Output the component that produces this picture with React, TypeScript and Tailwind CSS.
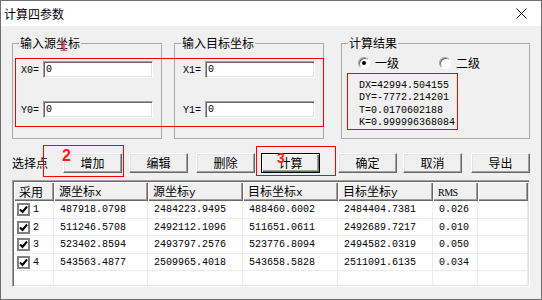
import React from "react";

const CJK = "font-['Noto_Sans_CJK_SC','Noto_Sans',sans-serif] text-[12px] leading-[14px]";
const MONO = "font-['Liberation_Mono','Noto_Sans_CJK_SC',monospace] text-[10px]";

function Btn({ label, ml, def }: { label: string; ml: string; def?: boolean }) {
  return (
    <div
      className={`${ml} w-[59px] h-[20px] flex items-center justify-center bg-[#f0f0f0] border ${
        def
          ? "border-black shadow-[inset_1px_1px_#fff,inset_-1px_-1px_#696969,inset_-2px_-2px_#a0a0a0]"
          : "border-t-white border-l-white border-b-[#696969] border-r-[#696969] shadow-[inset_-1px_-1px_#a0a0a0,inset_1px_1px_#e3e3e3]"
      } ${CJK} text-black`}
    >
      {label}
    </div>
  );
}

function Input({ value }: { value: string }) {
  return (
    <div className="w-[110px] h-[17px] bg-white border border-t-[#a0a0a0] border-l-[#a0a0a0] border-b-white border-r-white shadow-[inset_1px_1px_#696969,inset_-1px_-1px_#e3e3e3] flex items-center pl-[2px]">
      <span className={`${MONO} leading-[12px] text-black`}>{value}</span>
    </div>
  );
}

function Group({
  title,
  w,
  ml,
  children,
}: {
  title: string;
  w: string;
  ml?: string;
  children: React.ReactNode;
}) {
  return (
    <div className={`relative ${w} ${ml ?? ""} h-[96px] border border-[#a9a9a9]`}>
      <span className={`absolute left-[6px] top-[-8px] px-[1px] bg-[#f0f0f0] ${CJK} text-black`}>{title}</span>
      {children}
    </div>
  );
}

function CoordRow({ label, mt }: { label: string; mt?: string }) {
  return (
    <div className={`flex items-center ${mt ?? ""}`}>
      <span className={`w-[22px] ${MONO} leading-[12px] text-black pt-[3px]`}>{label}</span>
      <Input value="0" />
    </div>
  );
}

function Radio({ on, label }: { on?: boolean; label: string }) {
  return (
    <div className="w-[81px] flex items-center">
      <div className="w-[12px] h-[12px] rounded-full bg-white border border-t-[#a0a0a0] border-l-[#a0a0a0] border-b-white border-r-white shadow-[inset_1px_1px_#696969] flex items-center justify-center">
        {on && <div className="w-[4px] h-[4px] rounded-full bg-black" />}
      </div>
      <span className={`ml-[5px] ${CJK} text-black`}>{label}</span>
    </div>
  );
}

function Check() {
  return (
    <div className="w-[13px] h-[13px] bg-white border-2 border-[#808080] flex items-center justify-center">
      <svg width="9" height="9" viewBox="0 0 9 9">
        <path d="M1 4.5 L3.5 7 L8 1.5" stroke="#000" strokeWidth="2" fill="none" />
      </svg>
    </div>
  );
}

const cols = ["w-[40px]", "w-[94px]", "w-[95px]", "w-[95px]", "w-[95px]", "w-[45px]", "flex-1"];

const rows = [
  ["1", "487918.0798", "2484223.9495", "488460.6002", "2484404.7381", "0.026"],
  ["2", "511246.5708", "2492112.1096", "511651.0611", "2492689.7217", "0.010"],
  ["3", "523402.8594", "2493797.2576", "523776.8094", "2494582.0319", "0.050"],
  ["4", "543563.4877", "2509965.4018", "543658.5828", "2511091.6135", "0.034"],
];

function HeadCell({ w, children }: { w: string; children?: React.ReactNode }) {
  return (
    <div className={`${w} h-full flex items-center pl-[5px] bg-[#f0f0f0] shadow-[inset_1px_1px_#fff,inset_-1px_-1px_#696969,inset_-2px_-2px_#a0a0a0] text-black`}>
      <span className="leading-[14px] whitespace-nowrap">{children}</span>
    </div>
  );
}

function H({ cjk, latin }: { cjk: string; latin: string }) {
  return (
    <>
      <span className="font-['Noto_Sans_CJK_SC',sans-serif] text-[12px]">{cjk}</span>
      <span className="font-['Liberation_Mono',monospace] text-[11px]">{latin}</span>
    </>
  );
}

export default function App() {
  return (
    <div className="w-[542px] h-[300px] relative overflow-hidden border border-[#6f6f6f] bg-[#f0f0f0] flex flex-col">
      {/* title bar */}
      <div className="h-[25px] bg-white flex items-center justify-between pl-[3px] pr-[14px]">
        <span className={`${CJK} text-black`}>计算四参数</span>
        <svg width="11" height="11" viewBox="0 0 11 11">
          <path d="M0.5 0.5 L10.5 10.5 M10.5 0.5 L0.5 10.5" stroke="#000" strokeWidth="1" />
        </svg>
      </div>

      {/* body */}
      <div className="flex-1 flex flex-col px-[11px]">
        <div className="mt-[17px] flex">
          <Group title="输入源坐标" w="w-[150px]">
            <div className="pl-[8px] pt-[17px] flex flex-col">
              <CoordRow label="X0=" />
              <CoordRow label="Y0=" mt="mt-[23px]" />
            </div>
          </Group>
          <Group title="输入目标坐标" w="w-[150px]" ml="ml-[12px]">
            <div className="pl-[8px] pt-[17px] flex flex-col">
              <CoordRow label="X1=" />
              <CoordRow label="Y1=" mt="mt-[23px]" />
            </div>
          </Group>
          <Group title="计算结果" w="w-[189px]" ml="ml-[17px]">
            <div className="pl-[16px] pt-[12px] flex flex-col">
              <div className="flex">
                <Radio on label="一级" />
                <Radio label="二级" />
              </div>
              <div className={`mt-[10px] pl-[1px] ${MONO} leading-[12.4px] text-black whitespace-pre`}>
                <div>DX=42994.504155</div>
                <div>DY=-7772.214201</div>
                <div>T=0.0170602188</div>
                <div>K=0.999996368084</div>
              </div>
            </div>
          </Group>
        </div>

        {/* button row */}
        <div className="mt-[14px] h-[20px] flex items-center">
          <span className={`w-[51px] ${CJK} text-black`}>选择点</span>
          <Btn label="增加" ml="ml-0" />
          <Btn label="编辑" ml="ml-[7px]" />
          <Btn label="删除" ml="ml-[8px]" />
          <Btn label="计算" ml="ml-[6px]" def />
          <Btn label="确定" ml="ml-[18px]" />
          <Btn label="取消" ml="ml-[6px]" />
          <Btn label="导出" ml="ml-[9px]" />
        </div>

        {/* list */}
        <div className="mt-[7px] w-[518px] h-[107px] bg-white border border-t-[#a0a0a0] border-l-[#a0a0a0] border-b-white border-r-white shadow-[inset_1px_1px_#696969,inset_-1px_-1px_#e3e3e3] p-[1px] flex flex-col overflow-hidden">
          <div className="h-[19px] flex shrink-0">
            <HeadCell w={cols[0]}><span className="font-['Noto_Sans_CJK_SC',sans-serif] text-[12px]">采用</span></HeadCell>
            <HeadCell w={cols[1]}><H cjk="源坐标" latin="x" /></HeadCell>
            <HeadCell w={cols[2]}><H cjk="源坐标" latin="y" /></HeadCell>
            <HeadCell w={cols[3]}><H cjk="目标坐标" latin="x" /></HeadCell>
            <HeadCell w={cols[4]}><H cjk="目标坐标" latin="y" /></HeadCell>
            <HeadCell w={cols[5]}><span className="font-['Liberation_Serif',serif] text-[10px] tracking-[-0.5px]">RMS</span></HeadCell>
            <HeadCell w={cols[6]} />
          </div>
          {[...rows, null].map((r, i) => (
            <div key={i} className={`${i % 2 === 0 ? "h-[18px]" : "h-[17px]"} flex shrink-0`}>
              {cols.map((c, j) => (
                <div
                  key={j}
                  className={`${c} h-full border-r border-b border-[#ececec] flex items-center ${
                    j === 0 ? "pl-[3px]" : "pl-[6px]"
                  } ${MONO} text-black`}
                >
                  {r && j === 0 && (
                    <>
                      <Check />
                      <span className="ml-[3px]">{r[0]}</span>
                    </>
                  )}
                  {r && j > 0 && j < 6 && r[j]}
                </div>
              ))}
            </div>
          ))}
        </div>
      </div>

      {/* red annotations drawn on the screenshot */}
      <div className="absolute left-[14px] top-[57px] w-[309px] h-[69px] border border-[#ff0000]" />
      <div className="absolute left-[346px] top-[72px] w-[111px] h-[57px] border border-[#ff0000]" />
      <div className="absolute left-[42px] top-[144px] w-[81px] h-[32px] border border-[#ff0000]" />
      <div className="absolute left-[255px] top-[145px] w-[80px] h-[30px] border border-[#ff0000]" />
      <span className="absolute left-[59px] top-[38px] font-['Liberation_Sans',sans-serif] font-bold text-[13px] leading-[16px] text-[#ff4060]">1</span>
      <span className="absolute left-[61px] top-[146px] font-['Liberation_Sans',sans-serif] font-bold text-[16px] leading-[18px] text-[#ff1a1a]">2</span>
      <span className="absolute left-[276px] top-[149px] font-['Liberation_Sans',sans-serif] font-bold text-[14px] leading-[16px] text-[#ff1a1a]">3</span>
    </div>
  );
}
